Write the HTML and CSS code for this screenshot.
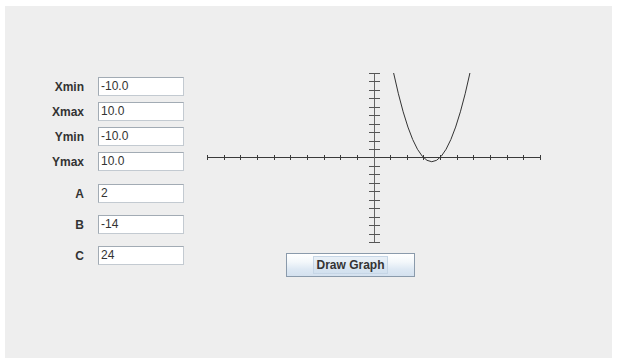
FILE: index.html
```html
<!DOCTYPE html>
<html>
<head>
<meta charset="utf-8">
<link rel="stylesheet" href="styles.css">
</head>
<body>
<div class="frame">
  <div class="form">
    <label class="lbl">Xmin</label><div class="field">-10.0</div>
    <label class="lbl">Xmax</label><div class="field">10.0</div>
    <label class="lbl">Ymin</label><div class="field">-10.0</div>
    <label class="lbl">Ymax</label><div class="field">10.0</div>
    <label class="lbl coef first">A</label><div class="field coef first">2</div>
    <label class="lbl coef">B</label><div class="field coef">-14</div>
    <label class="lbl coef">C</label><div class="field coef">24</div>
  </div>
  <div class="graphcol">
    <svg class="graph" width="350" height="185" viewBox="0 0 350 185">
      <g stroke="#3a3a3a" stroke-width="1" fill="none" shape-rendering="crispEdges">
        <line x1="7" y1="91.5" x2="340" y2="91.5"/>
        <line stroke="#666" x1="174.5" y1="7" x2="174.5" y2="176"/>
        <path d="M7.5 89V94M24.5 89V94M40.5 89V94M57.5 89V94M74.5 89V94M90.5 89V94M107.5 89V94M124.5 89V94M140.5 89V94M157.5 89V94M190.5 89V94M207.5 89V94M223.5 89V94M240.5 89V94M257.5 89V94M273.5 89V94M290.5 89V94M307.5 89V94M323.5 89V94M340.5 89V94"/>
        <path stroke="#555" d="M169 7.5H180M169 15.5H180M169 24.5H180M169 32.5H180M169 41.5H180M169 49.5H180M169 58.5H180M169 66.5H180M169 75.5H180M169 83.5H180M169 100.5H180M169 108.5H180M169 117.5H180M169 125.5H180M169 134.5H180M169 142.5H180M169 151.5H180M169 159.5H180M169 168.5H180M169 176.5H180"/>
      </g>
      <g transform="translate(173.5 91.5) scale(16.65 -8.45)">
        <path d="M1.2087 10 Q3.5 -11 5.7913 10" fill="none" stroke="#333" stroke-width="1" vector-effect="non-scaling-stroke"/>
      </g>
    </svg>
    <button class="btn"><span class="focus">Draw Graph</span></button>
  </div>
</div>
</body>
</html>
```

FILE: styles.css
```css
html, body {
  margin: 0;
  padding: 0;
  background: #ffffff;
}
body {
  width: 618px;
  height: 359px;
  overflow: hidden;
}
.frame {
  margin: 6px 0 0 5px;
  width: 607px;
  height: 352px;
  background: #eeeeee;
  display: flex;
  align-items: flex-start;
  font-family: "Liberation Sans", Arial, sans-serif;
  font-size: 12px;
  color: #333333;
}
.form {
  margin-top: 71px;
  margin-left: 39px;
  display: grid;
  grid-template-columns: 40px 86px;
  column-gap: 14px;
  row-gap: 6px;
}
.lbl {
  font-weight: bold;
  text-align: right;
  height: 19px;
  line-height: 20px;
  color: #333;
}
.field {
  box-sizing: border-box;
  height: 19px;
  background: #ffffff;
  border: 1px solid #a2abb4;
  border-right-color: #c3cad1;
  border-bottom-color: #c3cad1;
  padding-left: 2px;
  line-height: 17px;
  color: #333;
}
.coef {
  margin-top: 6px;
}
.coef.first {
  margin-top: 7px;
}
.graphcol {
  margin-top: 60px;
  margin-left: 16px;
  display: flex;
  flex-direction: column;
}
.graph {
  display: block;
}
.btn {
  margin-top: 2px;
  margin-left: 86px;
  box-sizing: border-box;
  width: 129px;
  height: 24px;
  border: 1px solid #8a9aab;
  background: linear-gradient(#ffffff 0%, #f4f8fb 35%, #dde8f3 70%, #d4e1ef 100%);
  font-family: "Liberation Sans", Arial, sans-serif;
  font-size: 12px;
  font-weight: bold;
  color: #333;
  padding: 0;
  display: flex;
  align-items: center;
  justify-content: center;
}
.focus {
  border: 1px solid #c6d6e6;
  background: rgba(200, 218, 236, 0.35);
  padding: 1px 2px;
  line-height: 14px;
}
```
